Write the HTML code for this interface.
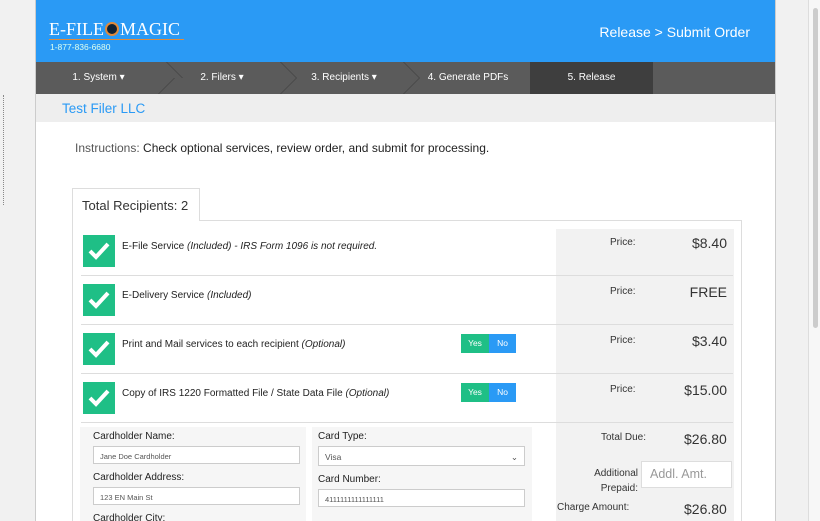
<!DOCTYPE html>
<html><head><style>
*{box-sizing:border-box;margin:0;padding:0}
body{width:820px;height:521px;overflow:hidden;background:#f1f1f1;font-family:"Liberation Sans",sans-serif;position:relative;color:#222}
.page{position:absolute;left:35px;top:0;width:741px;height:521px;background:#fff;border-left:1px solid #ccc;border-right:1px solid #ccc;overflow:hidden}
.hdr{height:62px;background:#2a9af5;position:relative;color:#fff}
.logo{position:absolute;left:13px;top:20px;font-family:"Liberation Serif",serif;font-size:18px;border-bottom:1px solid #e08a3a;width:135px;white-space:nowrap;line-height:19px}
.logo .g{display:inline-block;width:14px;height:14px;border-radius:50%;background:#123;border:2px solid #e08a3a;vertical-align:-1px;margin:0 1px}
.phone{position:absolute;left:14px;top:42px;font-size:8.5px;color:#dfe}
.ttl{position:absolute;right:25px;top:24px;font-size:14px}
.nav{height:32px;background:#5b5b5b;position:relative;color:#fff;font-size:10px}
.nav div{position:absolute;top:0;height:32px;line-height:32px;text-align:center}
.nav .s{width:1px;height:16px;background:#444}
.sub{height:28px;background:#eee;color:#2a9af5;font-size:13.5px;padding:7px 0 0 26px}
.ins{position:absolute;left:39px;top:141px;font-size:12px}
.ins span{color:#555}
.tab{position:absolute;left:36px;top:188px;width:128px;height:33px;border:1px solid #ddd;border-bottom:none;background:#fff;font-size:13px;padding:9px 0 0 9px;color:#333;z-index:2}
.box{position:absolute;left:36px;top:220px;width:670px;height:310px;border:1px solid #ddd}
.pc{position:absolute;left:483px;top:8px;width:178px;height:300px;background:#f2f2f2}
.row{position:absolute;left:8px;width:652px;border-bottom:1px solid #ddd;height:49px}
.ck{position:absolute;left:2px;top:8px;width:32px;height:32px;background:#1fbf86}
.ck svg{position:absolute;left:5px;top:5px}
.lbl{position:absolute;left:41px;top:14px;font-size:10px}
.pl{position:absolute;left:529px;top:10px;font-size:10px;color:#333}
.pv{position:absolute;right:6px;top:8px;font-size:14px;color:#333}
.yn{position:absolute;left:380px;top:9px;width:55px;height:19px;font-size:8.5px;color:#fff}
.yn b{font-weight:normal;position:absolute;top:0;height:19px;line-height:19px;width:28px;text-align:center}
.lp{position:absolute;left:44px;top:427px;width:226px;height:94px;background:#f6f6f6}
.rp{position:absolute;left:276px;top:427px;width:220px;height:94px;background:#f6f6f6}
.fl{position:absolute;font-size:10px;color:#222}
.in{position:absolute;height:18px;border:1px solid #ccc;background:#fff;font-size:7.5px;padding:5px 6px;color:#555}
</style></head><body>
<div style="position:absolute;left:808px;top:0;width:12px;height:521px;background:#f7f7f7;border-left:1px solid #ddd"><div style="position:absolute;left:4px;top:8px;width:5px;height:320px;background:#ccc;border-radius:3px"></div></div>
<div class="page">
<div class="hdr"><div class="logo">E-FILE<span class="g"></span>MAGIC</div><div class="phone">1-877-836-6680</div><div class="ttl">Release &gt; Submit Order</div></div>
<div class="nav">
<div style="left:0;width:125px">1. System ▾</div>
<div style="left:125px;width:122px">2. Filers ▾</div>
<div style="left:247px;width:122px">3. Recipients ▾</div>
<div style="left:370px;width:124px">4. Generate PDFs</div>
<div style="left:494px;width:123px;background:#3e3e3e">5. Release</div>
<div class="s" style="left:130px;transform:skewX(45deg);transform-origin:top"></div><div class="s" style="left:130px;top:16px;transform:skewX(-45deg)"></div>
<div class="s" style="left:252px;transform:skewX(45deg)"></div><div class="s" style="left:252px;top:16px;transform:skewX(-45deg)"></div>
<div class="s" style="left:375px;transform:skewX(45deg)"></div><div class="s" style="left:375px;top:16px;transform:skewX(-45deg)"></div>
</div>
<div class="sub">Test Filer LLC</div>
<div class="ins"><span>Instructions:</span> Check optional services, review order, and submit for processing.</div>
<div class="tab">Total Recipients: 2</div>
<div class="box">
<div class="pc"></div>
<div class="row" style="top:6px"><div class="ck"><svg width="22" height="22" viewBox="0 0 22 22"><path d="M2 11l6 6L20 4" stroke="#fff" stroke-width="4" fill="none"/></svg></div><div class="lbl">E-File Service <i>(Included) - IRS Form 1096 is not required.</i></div><div class="pl">Price:</div><div class="pv">$8.40</div></div>
<div class="row" style="top:55px"><div class="ck"><svg width="22" height="22" viewBox="0 0 22 22"><path d="M2 11l6 6L20 4" stroke="#fff" stroke-width="4" fill="none"/></svg></div><div class="lbl">E-Delivery Service <i>(Included)</i></div><div class="pl">Price:</div><div class="pv">FREE</div></div>
<div class="row" style="top:104px"><div class="ck"><svg width="22" height="22" viewBox="0 0 22 22"><path d="M2 11l6 6L20 4" stroke="#fff" stroke-width="4" fill="none"/></svg></div><div class="lbl">Print and Mail services to each recipient <i>(Optional)</i></div><div class="yn"><b style="left:0;background:#1fbf86">Yes</b><b style="left:28px;width:27px;background:#2a9af5">No</b></div><div class="pl">Price:</div><div class="pv">$3.40</div></div>
<div class="row" style="top:153px"><div class="ck"><svg width="22" height="22" viewBox="0 0 22 22"><path d="M2 11l6 6L20 4" stroke="#fff" stroke-width="4" fill="none"/></svg></div><div class="lbl">Copy of IRS 1220 Formatted File / State Data File <i>(Optional)</i></div><div class="yn"><b style="left:0;background:#1fbf86">Yes</b><b style="left:28px;width:27px;background:#2a9af5">No</b></div><div class="pl">Price:</div><div class="pv">$15.00</div></div>
</div>
<div class="lp"></div><div class="rp"></div>
<div class="fl" style="left:57px;top:431px">Cardholder Name:</div>
<div class="in" style="left:57px;top:446px;width:207px">Jane Doe Cardholder</div>
<div class="fl" style="left:57px;top:472px">Cardholder Address:</div>
<div class="in" style="left:57px;top:487px;width:207px">123 EN Main St</div>
<div class="fl" style="left:57px;top:513px">Cardholder City:</div>
<div class="fl" style="left:282px;top:431px">Card Type:</div>
<div class="in" style="left:282px;top:446px;width:207px;height:20px;font-size:8.5px">Visa<span style="float:right">⌄</span></div>
<div class="fl" style="left:282px;top:474px">Card Number:</div>
<div class="in" style="left:282px;top:489px;width:207px">4111111111111111</div>
<div class="fl" style="left:565px;top:432px;color:#333">Total Due:</div>
<div style="position:absolute;left:648px;top:431px;font-size:14px;color:#333">$26.80</div>
<div class="fl" style="left:550px;top:466px;text-align:right;width:52px;line-height:15px;color:#333">Additional Prepaid:</div>
<div style="position:absolute;left:605px;top:461px;width:91px;height:27px;border:1px solid #ddd;background:#fff;color:#999;font-size:12.5px;padding:5px 0 0 8px">Addl. Amt.</div>
<div class="fl" style="left:521px;top:502px;color:#333">Charge Amount:</div>
<div style="position:absolute;left:648px;top:501px;font-size:14px;color:#333">$26.80</div>
</div>
<div style="position:absolute;left:0;top:95px;width:4px;height:110px;border-right:1px dotted #888"></div>
</body></html>
